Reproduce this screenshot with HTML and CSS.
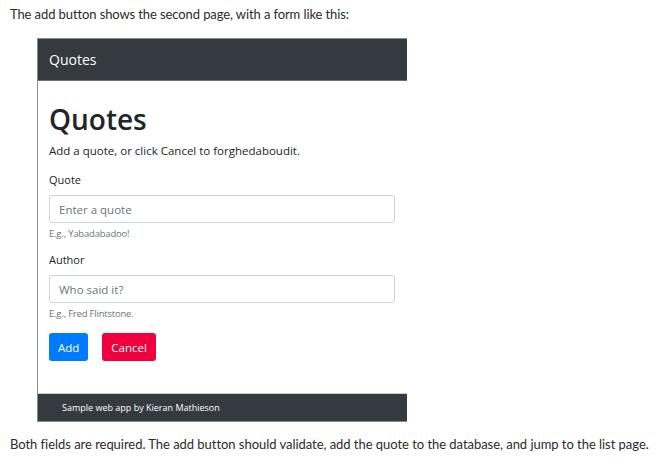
FILE: index.html
```html
<!DOCTYPE html>
<html>
<head>
<meta charset="utf-8">
<link rel="stylesheet" href="styles.css">
</head>
<body>
<p class="prose first">The add button shows the second page, with a form like this:</p>
<div class="shot">
  <div class="navbar"><span class="brand">Quotes</span></div>
  <div class="content">
    <h1 class="title">Quotes</h1>
    <p class="lead">Add a quote, or click Cancel to forghedaboudit.</p>
    <div class="group">
      <label class="label">Quote</label>
      <div class="input"><span class="ph">Enter a quote</span></div>
      <div class="help">E.g., Yabadabadoo!</div>
    </div>
    <div class="group">
      <label class="label">Author</label>
      <div class="input"><span class="ph">Who said it?</span></div>
      <div class="help">E.g., Fred Flintstone.</div>
    </div>
    <div class="buttons">
      <span class="btn btn-add">Add</span>
      <span class="btn btn-cancel">Cancel</span>
    </div>
  </div>
  <div class="footer">Sample web app by Kieran Mathieson</div>
</div>
<p class="prose last">Both fields are required. The add button should validate, add the quote to the database, and jump to the list page.</p>
</body>
</html>
```
FILE: styles.css
```css
html, body { margin: 0; padding: 0; background: #fff; }
body {
  width: 669px;
  height: 467px;
  overflow: hidden;
  font-family: "Lato", "Liberation Sans", sans-serif;
}
.prose {
  margin: 0;
  color: #2b2b2b;
  font-size: 13px;
  letter-spacing: -0.1px;
  line-height: 20px;
  padding-left: 10px;
  white-space: nowrap;
}
.first { padding-top: 4px; }
.last { margin-top: 12px; letter-spacing: -0.04px; }
.shot {
  margin: 14px 0 0 37px;
  width: 369px;
  display: flex;
  flex-direction: column;
  border-left: 1px solid #8a8a8a;
  border-top: 1px solid #8a8a8a;
  border-bottom: 1px solid #8a8a8a;
  font-family: "Open Sans", "Noto Sans", sans-serif;
  color: #212529;
}
.navbar {
  background: #343a40;
  height: 41px;
  display: flex;
  align-items: center;
  padding-left: 11px;
  border-bottom: 1px solid #6c6f73;
}
.brand { color: #fff; font-size: 14px; }
.content {
  padding: 22px 11px 32px 11px;
  display: flex;
  flex-direction: column;
}
.title {
  margin: 0;
  font-size: 28px;
  font-weight: 600;
  line-height: 32px;
}
.lead {
  margin: 8px 0 0 0;
  font-size: 11.5px;
  line-height: 16px;
}
.group { margin-top: 13px; display: flex; flex-direction: column; }
.group + .group { margin-top: 12px; }
.label { font-size: 11px; line-height: 16px; }
.input {
  margin-top: 7px;
  height: 26px;
  border: 1px solid #ced4da;
  border-radius: 3px;
  display: flex;
  align-items: center;
  padding-left: 9px;
  box-sizing: content-box;
  width: 335px;
}
.ph { color: #6c757d; font-size: 11.5px; }
.help { font-size: 9.5px; color: #6c757d; margin-top: 4px; line-height: 13px; letter-spacing: -0.2px; }
.buttons { display: flex; gap: 14px; margin-top: 13px; }
.btn {
  color: #fff;
  font-size: 11.5px;
  height: 28px;
  display: flex;
  align-items: center;
  padding: 0 9px;
  border-radius: 3px;
}
.btn-add { background: #007bff; }
.btn-cancel { background: #f0003c; }
.footer {
  background: #343a40;
  height: 27px;
  display: flex;
  align-items: center;
  padding-left: 24px;
  color: #fff;
  font-size: 9px;
  border-top: 1px solid #d0d0d0;
}
```
